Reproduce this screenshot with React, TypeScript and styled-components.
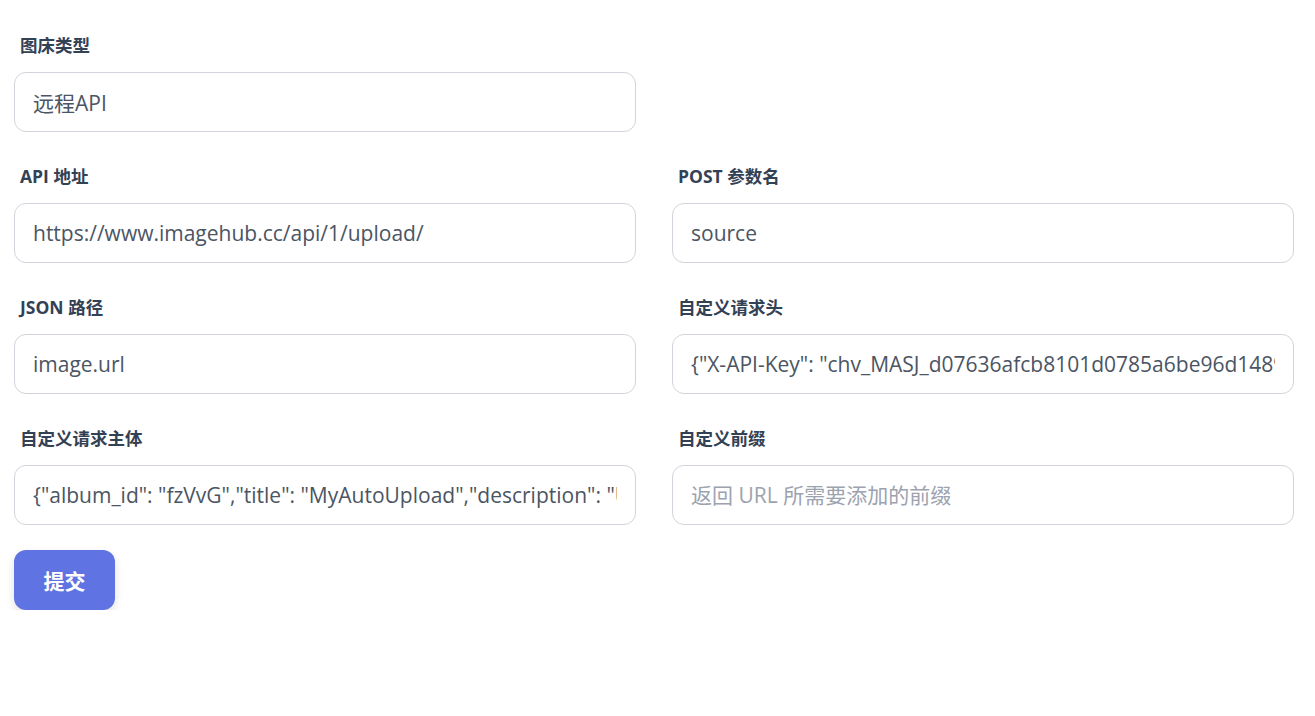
import React from "react";
import styled, { createGlobalStyle } from "styled-components";

const GlobalStyle = createGlobalStyle`
  html, body {
    margin: 0;
    padding: 0;
    background: #ffffff;
  }
  body {
    font-family: "Open Sans", "Noto Sans CJK SC", sans-serif;
  }
  * {
    box-sizing: border-box;
  }
`;

const Form = styled.form`
  width: 1280px;
  margin-left: 14px;
  padding-top: 33px;
`;

const Grid = styled.div`
  display: grid;
  grid-template-columns: 622px 622px;
  column-gap: 36px;
  row-gap: 32px;
`;

const Field = styled.div`
  display: flex;
  flex-direction: column;
`;

const Label = styled.label`
  display: block;
  padding-left: 6px;
  margin-bottom: 15px;
  font-size: 17.5px;
  line-height: 24px;
  font-weight: 700;
  color: #334155;
  font-family: "Open Sans", "Noto Sans CJK SC", sans-serif;
`;

const Input = styled.input`
  width: 100%;
  height: 60px;
  padding: 0 18px;
  border: 1px solid #d1d5db;
  border-radius: 12px;
  background: #ffffff;
  font-family: "Open Sans", "Noto Sans CJK SC", sans-serif;
  font-size: 21px;
  color: #4b5563;
  outline: none;
  &::placeholder {
    color: #9ca3af;
  }
`;

const SubmitButton = styled.button`
  margin-top: 25px;
  width: 101px;
  height: 60px;
  border: none;
  border-radius: 12px;
  background: #5f73e3;
  color: #ffffff;
  font-family: "Open Sans", "Noto Sans CJK SC", sans-serif;
  font-size: 21px;
  font-weight: 700;
  box-shadow: 0 4px 10px rgba(0, 0, 0, 0.12);
  cursor: pointer;
`;

interface FieldDef {
  label: string;
  value?: string;
  placeholder?: string;
}

const fields: (FieldDef | null)[] = [
  { label: "图床类型", value: "远程API" },
  null,
  { label: "API 地址", value: "https://www.imagehub.cc/api/1/upload/" },
  { label: "POST 参数名", value: "source" },
  { label: "JSON 路径", value: "image.url" },
  {
    label: "自定义请求头",
    value: '{"X-API-Key": "chv_MASJ_d07636afcb8101d0785a6be96d1489c5e1f4d2"}',
  },
  {
    label: "自定义请求主体",
    value:
      '{"album_id": "fzVvG","title": "MyAutoUpload","description": "Uploaded by API"}',
  },
  { label: "自定义前缀", placeholder: "返回 URL 所需要添加的前缀" },
];

export default function App() {
  return (
    <>
      <GlobalStyle />
      <Form onSubmit={(e) => e.preventDefault()}>
        <Grid>
          {fields.map((f, i) =>
            f ? (
              <Field key={i}>
                <Label>{f.label}</Label>
                <Input defaultValue={f.value} placeholder={f.placeholder} />
              </Field>
            ) : (
              <div key={i} />
            )
          )}
        </Grid>
        <SubmitButton type="submit">提交</SubmitButton>
      </Form>
    </>
  );
}
